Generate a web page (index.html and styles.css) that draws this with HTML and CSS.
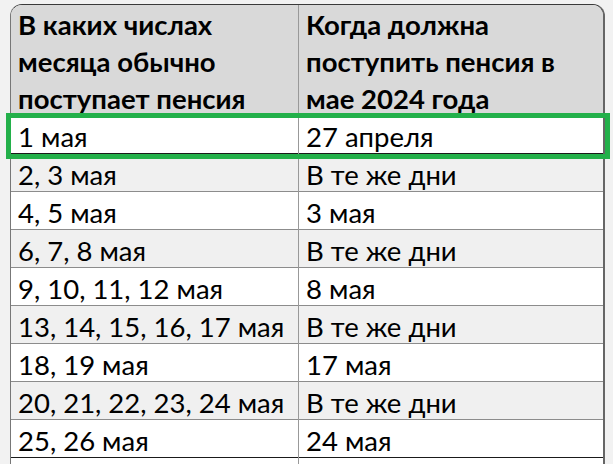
FILE: index.html
```html
<!DOCTYPE html>
<html lang="ru">
<head>
<meta charset="utf-8">
<link rel="stylesheet" href="styles.css">
</head>
<body>
<div class="sheet">
  <div class="row head">
    <div class="cell">В каких числах<br>месяца обычно<br>поступает пенсия</div>
    <div class="cell">Когда должна<br>поступить пенсия в<br>мае 2024 года</div>
  </div>
  <div class="row hl dark"><div class="cell">1 мая</div><div class="cell">27 апреля</div></div>
  <div class="row alt"><div class="cell">2, 3 мая</div><div class="cell">В те же дни</div></div>
  <div class="row"><div class="cell">4, 5 мая</div><div class="cell">3 мая</div></div>
  <div class="row alt"><div class="cell">6, 7, 8 мая</div><div class="cell">В те же дни</div></div>
  <div class="row"><div class="cell">9, 10, 11, 12 мая</div><div class="cell">8 мая</div></div>
  <div class="row alt"><div class="cell">13, 14, 15, 16, 17 мая</div><div class="cell">В те же дни</div></div>
  <div class="row"><div class="cell">18, 19 мая</div><div class="cell">17 мая</div></div>
  <div class="row alt"><div class="cell">20, 21, 22, 23, 24 мая</div><div class="cell">В те же дни</div></div>
  <div class="row dark"><div class="cell">25, 26 мая</div><div class="cell">24 мая</div></div>
  <div class="row tail"><div class="cell"></div><div class="cell"></div></div>
</div>
</body>
</html>
```
FILE: styles.css
```css
html, body {
  margin: 0;
  padding: 0;
  background: #f2f2f2;
  overflow: hidden;
  height: 464px;
}
.sheet {
  margin: 4px 0 0 10px;
  width: 592px;
  border-top: 1px solid #3a3a3a;
  border-left: 1px solid #777;
  border-right: 2px solid #666;
  border-radius: 12px 12px 0 0;
  font-family: Lato, "Liberation Sans", sans-serif;
  font-size: 27.5px;
  color: #000;
}
.row {
  display: grid;
  grid-template-columns: 287px 1fr;
  height: 37px;
  border-bottom: 1px solid #8c8c8c;
  background: #fff;
  position: relative;
}
.row.alt { background: #f0f0f0; }
.row.dark { border-bottom-color: #1a1a1a; }
.row.tail { height: 6px; border-bottom: none; }
.cell {
  padding-left: 7px;
  padding-top: 2px;
  line-height: 37px;
  white-space: nowrap;
}
.cell + .cell {
  border-left: 1px solid #999;
}
.head {
  height: 111px;
  background: #d9d9d9;
  border-radius: 11px 11px 0 0;
  border-bottom: none;
  font-weight: bold;
}
.head .cell {
  padding-top: 1px;
  line-height: 37px;
}
.hl { z-index: 1; }
.hl::after {
  content: "";
  position: absolute;
  left: -5px;
  right: -7px;
  top: -3px;
  bottom: -6px;
  border: 5px solid #23b04a;
  pointer-events: none;
}
```
